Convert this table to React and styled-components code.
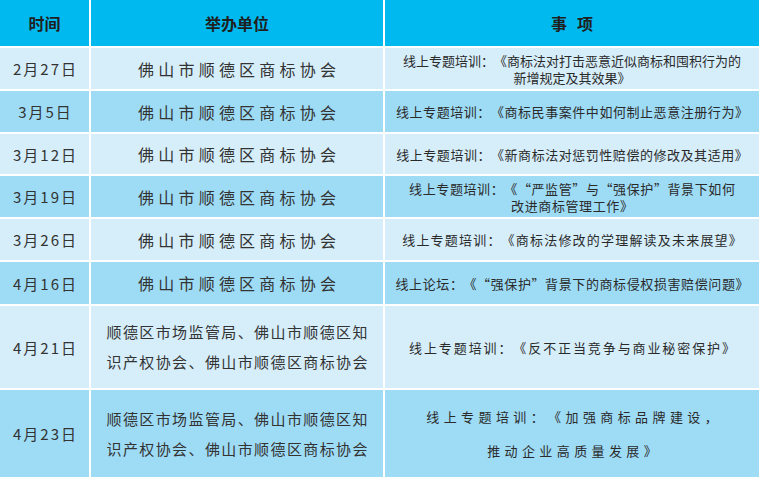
import React from "react";
import styled, { createGlobalStyle } from "styled-components";

const Global = createGlobalStyle`
  html, body { margin: 0; padding: 0; background: #ffffff; }
  body {
    font-family: "Noto Sans CJK SC", "Noto Sans", sans-serif;
    text-spacing-trim: space-all;
  }
`;

const Table = styled.div`
  display: grid;
  grid-template-columns: 89px 292px 374px;
  grid-template-rows: 46px 41px 41px 40px 41px 41px 42px 82px 87px;
  gap: 2px;
  padding-right: 2px;
  width: 761px;
  height: 477px;
  box-sizing: border-box;
  background: #ffffff;
`;

const Cell = styled.div`
  display: flex;
  align-items: center;
  justify-content: center;
  text-align: center;
  box-sizing: border-box;
  color: #2e2e2e;
  background: ${(p) => (p.$tone === "head" ? "#00b9ef" : p.$tone === "dark" ? "#9edcf6" : "#d6eefa")};
`;

const HeadText = styled.span`
  font-size: 16px;
  font-weight: 700;
  color: #1f1f1f;
  letter-spacing: ${(p) => p.$ls || 0}px;
  padding-left: ${(p) => p.$ls || 0}px;
`;

const DateText = styled.span`
  font-size: 15px;
  letter-spacing: 2px;
  padding-left: 2px;
  color: #333;
`;

const OrgText = styled.span`
  font-size: ${(p) => (p.$multi ? 15 : 16)}px;
  letter-spacing: ${(p) => (p.$multi ? 1.4 : 4.2)}px;
  padding-left: ${(p) => (p.$multi ? 1.4 : 4.2)}px;
  line-height: ${(p) => (p.$multi ? 30 : 20)}px;
  color: #333;
`;

const TopicText = styled.span`
  font-size: 13px;
  letter-spacing: ${(p) => p.$ls}px;
  padding-left: ${(p) => p.$ls}px;
  line-height: ${(p) => p.$lh}px;
  color: #2a2a2a;
  white-space: nowrap;
`;

const ORG = "佛山市顺德区商标协会";
const ORG2 = ["顺德区市场监管局、佛山市顺德区知", "识产权协会、佛山市顺德区商标协会"];

const rows = [
  { date: "2月27日", org: [ORG], topic: ["线上专题培训：《商标法对打击恶意近似商标和囤积行为的", "新增规定及其效果》"], ls: 0, lh: 17 },
  { date: "3月5日", org: [ORG], topic: ["线上专题培训：《商标民事案件中如何制止恶意注册行为》"], ls: 0.56, lh: 17 },
  { date: "3月12日", org: [ORG], topic: ["线上专题培训：《新商标法对惩罚性赔偿的修改及其适用》"], ls: 0.54, lh: 17 },
  { date: "3月19日", org: [ORG], topic: ["线上专题培训：《“严监管”与“强保护”背景下如何", "改进商标管理工作》"], ls: 0.6, lh: 17 },
  { date: "3月26日", org: [ORG], topic: ["线上专题培训：《商标法修改的学理解读及未来展望》"], ls: 1.2, lh: 17 },
  { date: "4月16日", org: [ORG], topic: ["线上论坛：《“强保护”背景下的商标侵权损害赔偿问题》"], ls: 0.6, lh: 17 },
  { date: "4月21日", org: ORG2, topic: ["线上专题培训：《反不正当竞争与商业秘密保护》"], ls: 1.9, lh: 17 },
  { date: "4月23日", org: ORG2, topic: ["线上专题培训：《加强商标品牌建设，", "推动企业高质量发展》"], ls: 4.4, lh: 34 },
];

const Lines = ({ lines }) =>
  lines.map((l, i) => (
    <React.Fragment key={i}>
      {i > 0 && <br />}
      {l}
    </React.Fragment>
  ));

export default function App() {
  return (
    <>
      <Global />
      <Table>
        <Cell $tone="head"><HeadText>时间</HeadText></Cell>
        <Cell $tone="head"><HeadText>举办单位</HeadText></Cell>
        <Cell $tone="head"><HeadText $ls={10}>事项</HeadText></Cell>
        {rows.map((r, i) => {
          const tone = i % 2 === 0 ? "light" : "dark";
          return (
            <React.Fragment key={r.date}>
              <Cell $tone={tone}><DateText>{r.date}</DateText></Cell>
              <Cell $tone={tone}>
                <OrgText $multi={r.org.length > 1}><Lines lines={r.org} /></OrgText>
              </Cell>
              <Cell $tone={tone}>
                <TopicText $ls={r.ls} $lh={r.lh}><Lines lines={r.topic} /></TopicText>
              </Cell>
            </React.Fragment>
          );
        })}
      </Table>
    </>
  );
}
